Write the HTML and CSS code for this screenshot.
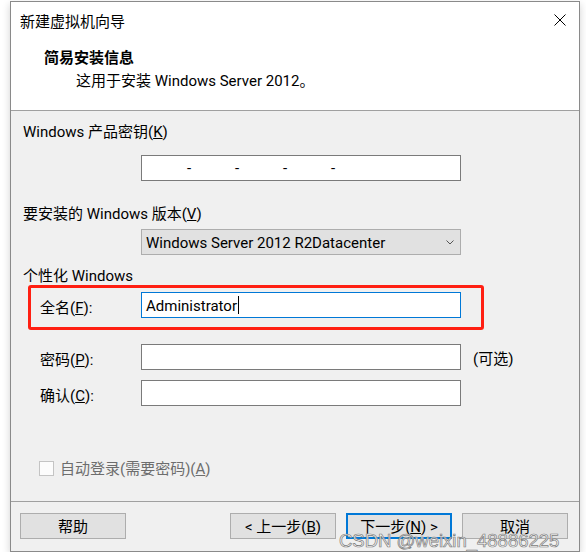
FILE: index.html
```html
<!DOCTYPE html>
<html lang="zh-CN">
<head>
  <meta charset="UTF-8" />
  <title>新建虚拟机向导</title>
  <link rel="stylesheet" href="styles.css">
</head>
<body>

  <div class="window">
    <div class="titlebar">
      <span class="title">新建虚拟机向导</span>
      <svg class="close" width="12" height="12" viewBox="0 0 12 12">
        <path d="M0.5 0.5 L11.5 11.5 M11.5 0.5 L0.5 11.5" stroke="#000" stroke-width="1" fill="none"/>
      </svg>
    </div>

    <div class="banner">
      <h1>简易安装信息</h1>
      <p>这用于安装 Windows Server 2012。</p>
    </div>

    <div class="content">
      <div class="label">Windows 产品密钥(<u>K</u>)</div>
      <div class="field key">
        <span>-</span><span>-</span><span>-</span><span>-</span>
      </div>

      <div class="label gap">要安装的 Windows 版本(<u>V</u>)</div>
      <div class="select">
        <span>Windows Server 2012 R2Datacenter</span>
        <svg width="8" height="5" viewBox="0 0 8 5">
          <path d="M0.5 0.5 L4 4 L7.5 0.5" stroke="#555" stroke-width="1" fill="none"/>
        </svg>
      </div>

      <div class="label group">个性化 Windows</div>

      <div class="row name">
        <label>全名(<u>F</u>):</label>
        <div class="field focus">Administrator<span class="caret"></span></div>
        <div class="highlight"></div>
      </div>

      <div class="row pw">
        <label>密码(<u>P</u>):</label>
        <div class="field"></div>
        <span class="note">(可选)</span>
      </div>

      <div class="row confirm">
        <label>确认(<u>C</u>):</label>
        <div class="field"></div>
      </div>

      <div class="check">
        <span class="box"></span>
        <span>自动登录(需要密码)(<u>A</u>)</span>
      </div>
    </div>

    <div class="footer">
      <button class="btn">帮助</button>
      <button class="btn back">&lt; 上一步(<u>B</u>)</button>
      <button class="btn primary">下一步(<u>N</u>) &gt;</button>
      <button class="btn">取消</button>
    </div>

    <div class="watermark">CSDN @weixin_48886225</div>
  </div>

</body>
</html>
```

FILE: styles.css
```css
body {
  margin: 0;
  background: #ffffff;
  font-family: Roboto, "Noto Sans CJK SC", sans-serif;
  font-size: 15px;
  color: #000;
}

.window {
  position: relative;
  margin: 1px 0 0 10px;
  width: 570px;
  height: 551px;
  box-sizing: border-box;
  border: 1px solid #8a8a8a;
  display: flex;
  flex-direction: column;
  background: #f0f0f0;
  box-shadow: 0 3px 8px rgba(0, 0, 0, 0.18);
}

.titlebar {
  height: 36px;
  display: flex;
  align-items: center;
  justify-content: space-between;
  padding: 0 13px 0 9px;
  background: #fff;
}

.title {
  line-height: 20px;
  padding-top: 3px;
}

.banner {
  height: 73px;
  box-sizing: border-box;
  padding: 9px 0 0 33px;
  background: #fff;
  border-bottom: 1px solid #a0a0a0;
}

.banner h1 {
  margin: 0;
  font-size: 15px;
  font-weight: bold;
  line-height: 22px;
}

.banner p {
  margin: 0;
  padding: 1px 0 0 32px;
  line-height: 22px;
}

.content {
  height: 391px;
  box-sizing: border-box;
  padding: 11px 0 0 12px;
  border-bottom: 1px solid #a0a0a0;
}

.label {
  line-height: 20px;
}

.label.gap {
  margin-top: 23px;
}

.label.group {
  margin-top: 11px;
}

.field {
  width: 320px;
  height: 26px;
  box-sizing: border-box;
  border: 1px solid #7a7a7a;
  background: #fff;
  display: flex;
  align-items: center;
}

.key {
  margin: 13px 0 0 118px;
  padding-left: 23px;
}

.key span {
  width: 48px;
  text-align: center;
  line-height: 20px;
}

.select {
  margin: 5px 0 0 118px;
  width: 320px;
  height: 26px;
  box-sizing: border-box;
  border: 1px solid #adadad;
  background: #e1e1e1;
  display: flex;
  align-items: center;
  justify-content: space-between;
  padding: 2px 6px 0 4px;
}

.select svg {
  margin-top: -2px;
}

.row {
  position: relative;
  display: flex;
  align-items: center;
  padding-left: 17px;
}

.row label {
  width: 101px;
  padding-top: 2px;
}

.row.name {
  margin-top: 6px;
}

.row.pw {
  margin-top: 26px;
}

.row.confirm {
  margin-top: 10px;
}

.field.focus {
  border-color: #0078d7;
  padding: 2px 0 0 4px;
}

.caret {
  display: inline-block;
  width: 1px;
  height: 18px;
  margin: -2px 0 0 1px;
  background: #000;
}

.note {
  margin-left: 12px;
  padding-top: 1px;
}

.highlight {
  position: absolute;
  left: 5px;
  top: -7px;
  width: 456px;
  height: 45px;
  box-sizing: border-box;
  border: 3px solid #ff1f12;
  border-radius: 3px;
}

.check {
  margin-top: 51px;
  padding-left: 16px;
  display: flex;
  align-items: center;
  line-height: 20px;
  color: #6d6d6d;
}

.check span:last-child {
  padding-top: 2px;
}

.box {
  width: 13px;
  height: 13px;
  border: 1px solid #c4c4c4;
  background: #fcfcfc;
  margin-right: 6px;
}

.footer {
  flex: 1;
  display: flex;
  align-items: flex-start;
  gap: 10px;
  padding: 11px 0 0 9px;
}

.btn {
  width: 106px;
  height: 26px;
  box-sizing: border-box;
  border: 1px solid #adadad;
  background: #e1e1e1;
  font-family: inherit;
  font-size: 15px;
  color: #000;
  padding: 2px 0 0;
  line-height: 20px;
}

.btn.back {
  margin-left: 94px;
}

.btn.primary {
  border: 2px solid #0078d7;
  padding-top: 1px;
}

.watermark {
  position: absolute;
  left: 328px;
  top: 530px;
  font-family: "Liberation Sans", Arial, sans-serif;
  font-size: 18.5px;
  line-height: 1;
  white-space: nowrap;
  color: rgba(255, 255, 255, 0.85);
  -webkit-text-stroke: 0.7px #7a7a7a;
}
```
